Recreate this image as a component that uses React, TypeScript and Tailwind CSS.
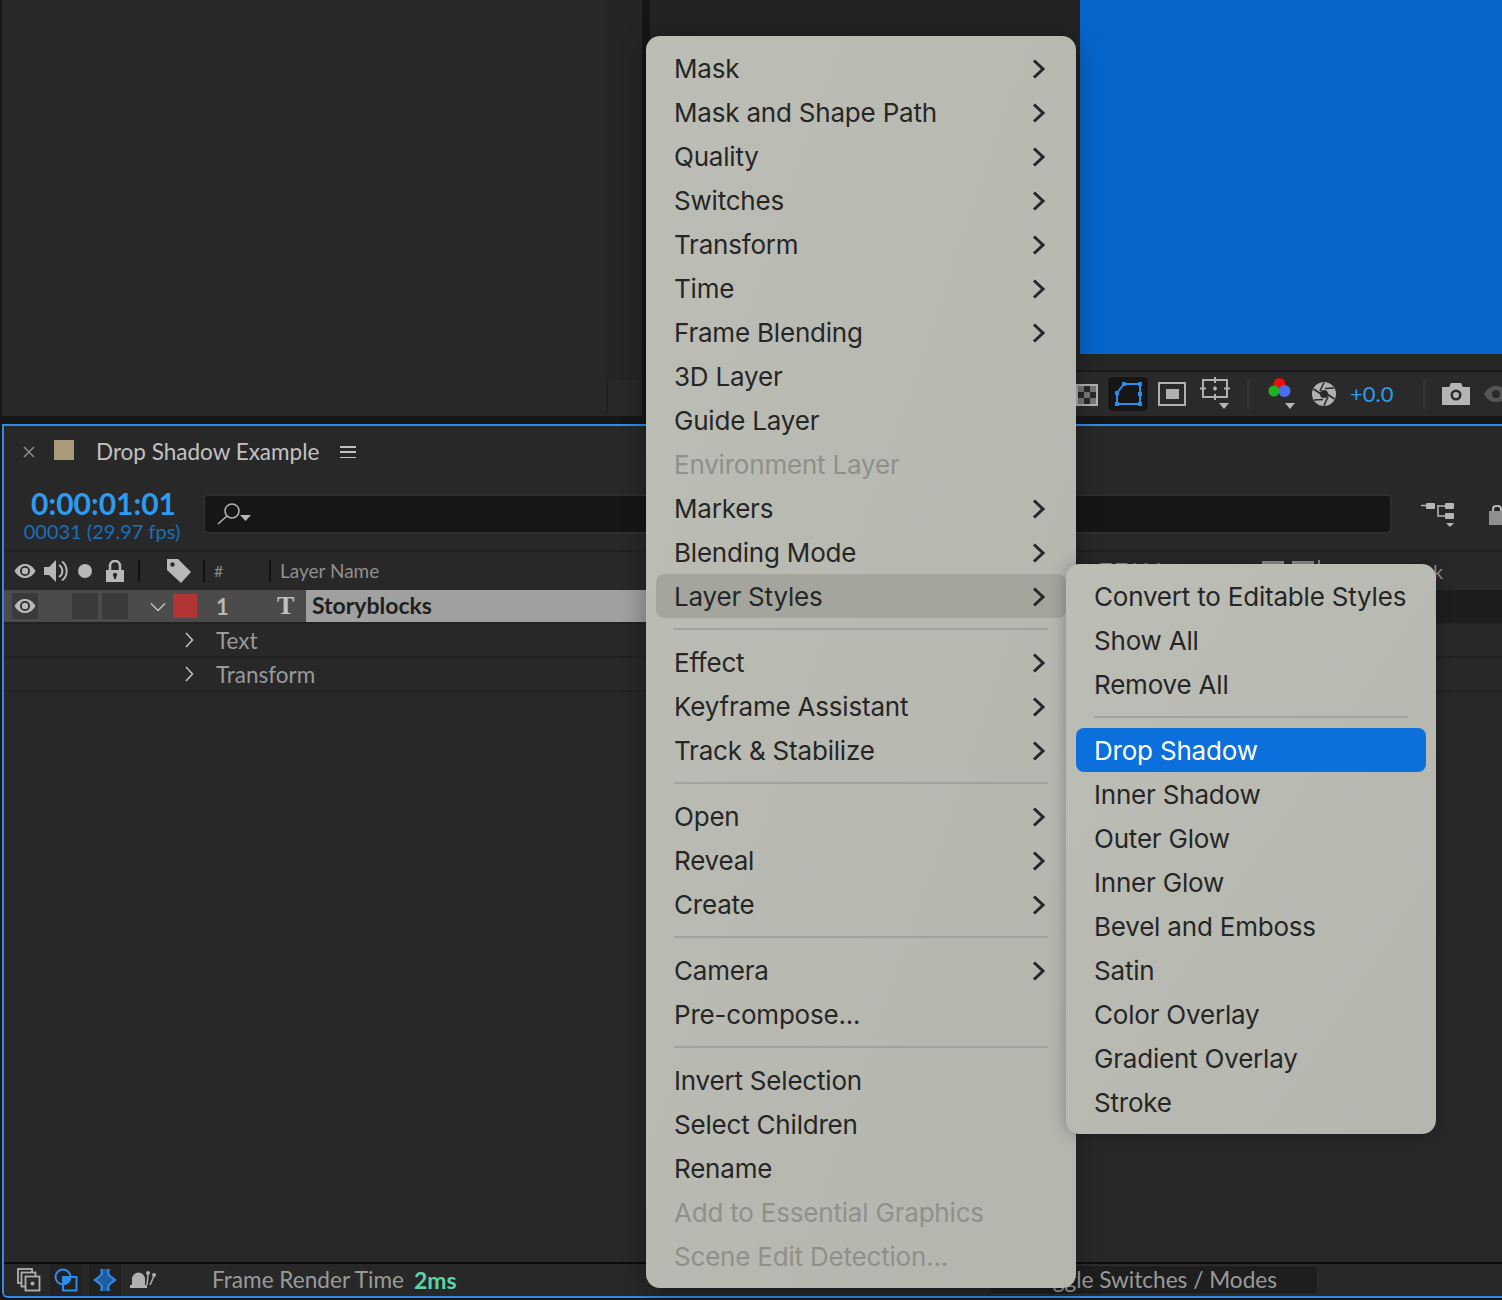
import React from 'react';

const panelFont = { fontFamily: 'Lato, "Noto Sans", sans-serif' };
const menuFont = { fontFamily: 'Inter, "Noto Sans", sans-serif' };

type MenuEntry =
  | { sep: true }
  | { label: string; sub?: boolean; disabled?: boolean; hover?: boolean; active?: boolean };

const mainMenu: MenuEntry[] = [
  { label: 'Mask', sub: true },
  { label: 'Mask and Shape Path', sub: true },
  { label: 'Quality', sub: true },
  { label: 'Switches', sub: true },
  { label: 'Transform', sub: true },
  { label: 'Time', sub: true },
  { label: 'Frame Blending', sub: true },
  { label: '3D Layer' },
  { label: 'Guide Layer' },
  { label: 'Environment Layer', disabled: true },
  { label: 'Markers', sub: true },
  { label: 'Blending Mode', sub: true },
  { label: 'Layer Styles', sub: true, hover: true },
  { sep: true },
  { label: 'Effect', sub: true },
  { label: 'Keyframe Assistant', sub: true },
  { label: 'Track & Stabilize', sub: true },
  { sep: true },
  { label: 'Open', sub: true },
  { label: 'Reveal', sub: true },
  { label: 'Create', sub: true },
  { sep: true },
  { label: 'Camera', sub: true },
  { label: 'Pre-compose...' },
  { sep: true },
  { label: 'Invert Selection' },
  { label: 'Select Children' },
  { label: 'Rename' },
  { label: 'Add to Essential Graphics', disabled: true },
  { label: 'Scene Edit Detection...', disabled: true },
];

const stylesMenu: MenuEntry[] = [
  { label: 'Convert to Editable Styles' },
  { label: 'Show All' },
  { label: 'Remove All' },
  { sep: true },
  { label: 'Drop Shadow', active: true },
  { label: 'Inner Shadow' },
  { label: 'Outer Glow' },
  { label: 'Inner Glow' },
  { label: 'Bevel and Emboss' },
  { label: 'Satin' },
  { label: 'Color Overlay' },
  { label: 'Gradient Overlay' },
  { label: 'Stroke' },
];

function MenuItems({ items }: { items: MenuEntry[] }) {
  return (
    <>
      {items.map((item, i) => {
        if ('sep' in item) {
          return (
            <div key={i} className="h-[22px] flex items-center px-[18px]">
              <div className="h-[2px] w-full bg-[#a1a39c]" />
            </div>
          );
        }
        return (
          <div
            key={i}
            className={`h-[44px] flex items-center justify-between pl-[18px] pr-[20px] rounded-[8px] text-[26px] tracking-[-0.2px] ${
              item.hover ? 'bg-[#a4a69e]' : ''
            } ${item.active ? 'bg-[#0b6fdc] text-white' : item.disabled ? 'text-[#8e9089]' : 'text-[#262626]'}`}
          >
            <span className="whitespace-nowrap">{item.label}</span>
            {item.sub && (
              <svg width="14" height="22" viewBox="0 0 14 22" fill="none" stroke="#26262a" strokeWidth="3" className="mt-[1px]">
                <path d="M2 2.5l9 8.5-9 8.5" />
              </svg>
            )}
          </div>
        );
      })}
    </>
  );
}

function Caret({ className = '' }: { className?: string }) {
  return (
    <svg width="10" height="6" viewBox="0 0 10 6" className={className}>
      <path d="M0 0h10L5 6z" fill="#b5b5b5" />
    </svg>
  );
}

function Eye() {
  return (
    <svg width="22" height="14" viewBox="0 0 22 14">
      <path d="M0.5 7C4 1.5 7.5 0 11 0s7 1.5 10.5 7c-3.5 5.5-7 7-10.5 7S4 12.500.5 7z" fill="#b8b8b8" />
      <circle cx="11" cy="7" r="5" fill="#2a2a2a" />
      <circle cx="11" cy="7" r="3.2" fill="#b8b8b8" />
    </svg>
  );
}

function ViewerToolbar() {
  return (
    <div className="h-[44px] bg-[#2a2a2a] flex items-center overflow-hidden">
      <svg width="22" height="22" viewBox="0 0 22 22" className="ml-[426px] mt-[2px] shrink-0">
        <rect x="1" y="1" width="20" height="20" fill="#2a2a2a" stroke="#b0b0b0" strokeWidth="2" />
        <path d="M2 2h6v6H2zM14 2h6v6h-6zM8 8h6v6H8zM2 14h6v6H2zM14 14h6v6h-6z" fill="#777" />
      </svg>
      <div className="ml-[9px] w-[42px] h-[36px] bg-[#161616] rounded-[5px] border border-[#2f2f2f] flex items-center justify-center shrink-0">
        <svg width="30" height="26" viewBox="0 0 30 26" fill="none" stroke="#2d8ceb" strokeWidth="2">
          <path d="M11 3h16v20H4v-11z" />
          <path d="M9 1h4v4H9zM25 1h4v4h-4zM2 10h4v4H2zM2 21h4v4H2zM25 21h4v4h-4zM25 11h4v4h-4z" fill="#2d8ceb" stroke="none" />
        </svg>
      </div>
      <svg width="28" height="24" viewBox="0 0 28 24" className="ml-[9px] shrink-0">
        <rect x="1" y="1" width="26" height="22" fill="none" stroke="#b0b0b0" strokeWidth="2" />
        <rect x="8" y="7" width="13" height="10" fill="#b0b0b0" />
      </svg>
      <div className="ml-[14px] relative w-[30px] h-[36px] shrink-0">
        <svg width="30" height="24" viewBox="0 0 30 24" fill="none" stroke="#b0b0b0" strokeWidth="2">
          <rect x="3" y="4" width="24" height="17" />
          <path d="M15 1v6M15 18v6M0 12.500h6M24 12.500h6M13 12.500h4M15 10.500v4" />
        </svg>
        <Caret className="absolute right-[1px] bottom-[3px]" />
      </div>
      <div className="ml-[17px] w-[3px] h-[30px] bg-[#333333] shrink-0" />
      <div className="ml-[18px] relative w-[26px] h-[34px] shrink-0">
        <svg width="24" height="22" viewBox="0 0 24 22">
          <circle cx="11.500" cy="7" r="6" fill="#f00a0a" />
          <circle cx="6" cy="14" r="5.500" fill="#1eb41e" />
          <circle cx="16.500" cy="14" r="6" fill="#4a6ef0" />
        </svg>
        <Caret className="absolute right-[-1px] bottom-[2px]" />
      </div>
      <svg width="24" height="24" viewBox="0 0 24 24" className="ml-[18px] shrink-0">
        <circle cx="12" cy="12" r="12" fill="#b0b0b0" />
        <g stroke="#2a2a2a" strokeWidth="1.600" fill="none">
          <path d="M12 0.500L8 9M22 6L13 6.500M22.500 17L15 12M12 23.500l4-9M2 18l9-.5M1.500 7L9 12" />
        </g>
        <circle cx="12" cy="12" r="4" fill="#2a2a2a" />
      </svg>
      <span className="ml-[14px] w-[42px] pb-[2px] text-[22px] text-[#2d9cf0] shrink-0" style={panelFont}>+0.0</span>
      <div className="ml-[31px] w-[3px] h-[30px] bg-[#333333] shrink-0" />
      <svg width="28" height="22" viewBox="0 0 28 22" className="ml-[16px] shrink-0">
        <path d="M0 4h7l2-4h10l2 4h7v18H0z" fill="#b5b5b5" />
        <circle cx="14" cy="12" r="5.500" fill="#2a2a2a" />
        <circle cx="14" cy="12" r="3" fill="#b5b5b5" />
      </svg>
      <svg width="24" height="22" viewBox="0 0 24 22" className="ml-[14px] shrink-0" fill="#555">
        <path d="M0 11C4 4 8 3 12 3s8 1 12 8c-4 7-8 8-12 8S4 18 0 11z" />
        <circle cx="12" cy="11" r="4" fill="#2a2a2a" />
      </svg>
    </div>
  );
}

function TimelineHeader() {
  return (
    <div className="h-[52px] flex items-center shrink-0">
      <svg width="12" height="12" viewBox="0 0 12 12" stroke="#8c8c8c" strokeWidth="1.500" className="ml-[19px]">
        <path d="M1 1l10 10M11 1L1 11" />
      </svg>
      <div className="ml-[19px] mb-[4px] w-[20px] h-[20px] bg-[#a99a7b]" />
      <span className="ml-[22px] w-[223px] text-[22.5px] text-[#c2c2c2] whitespace-nowrap" style={panelFont}>Drop Shadow Example</span>
      <div className="ml-[21px] w-[16px] h-[12px] flex flex-col justify-between">
        <div className="h-[1.5px] bg-[#c2c2c2]" />
        <div className="h-[1.5px] bg-[#c2c2c2]" />
        <div className="h-[1.5px] bg-[#c2c2c2]" />
      </div>
    </div>
  );
}

function TimeRow() {
  return (
    <div className="h-[74px] flex items-start shrink-0 border-b-2 border-[#212121]" style={panelFont}>
      <div className="w-[199px] pt-[9px] flex flex-col items-center shrink-0">
        <span className="text-[30px] leading-[32px] font-bold text-[#2d9cf0] whitespace-nowrap">0:00:01:01</span>
        <span className="text-[20px] leading-[25px] text-[#1a6fb8] whitespace-nowrap pr-[3px]">00031 (29.97 fps)</span>
      </div>
      <div className="mt-[16px] w-[1189px] h-[40px] bg-[#161616] border-2 border-[#2e2e2e] rounded-[5px] flex items-center pl-[12px] shrink-0">
        <svg width="36" height="24" viewBox="0 0 36 24" fill="none" stroke="#b5b5b5" strokeWidth="1.500">
          <circle cx="15" cy="9" r="7" />
          <path d="M10 14L1 22" />
          <path d="M23 13h11l-5.500 6z" fill="#b5b5b5" stroke="none" />
        </svg>
      </div>
      <svg width="36" height="28" viewBox="0 0 36 28" className="ml-[29px] mt-[25px] shrink-0">
        <path d="M0 2.500h6M16 3h10M17 3v10h10" fill="none" stroke="#b5b5b5" strokeWidth="1.500" />
        <rect x="5" y="0" width="9" height="6" rx="1" fill="#b5b5b5" />
        <rect x="24" y="0" width="9" height="6" rx="1" fill="#b5b5b5" />
        <rect x="24" y="10" width="9" height="6" rx="1" fill="#b5b5b5" />
        <path d="M25 20h8l-4 4z" fill="#b5b5b5" />
      </svg>
      <div className="ml-[32px] mt-[27px] w-[14px] shrink-0 flex flex-col">
        <div className="ml-[3px] w-[10px] h-[6px] border-2 border-b-0 border-[#b5b5b5] rounded-t-[4px]" />
        <div className="w-[14px] h-[14px] bg-[#8f8f8f]" />
      </div>
    </div>
  );
}

function ColumnHeader() {
  return (
    <div className="h-[38px] flex items-center shrink-0 text-[#8f8f8f] text-[19px] relative" style={panelFont}>
      <div className="ml-[10px]"><Eye /></div>
      <svg width="26" height="24" viewBox="0 0 26 24" className="ml-[8px]">
        <path d="M0 8h5l7-7v22l-7-7H0z" fill="#b8b8b8" />
        <path d="M15 6a7 7 0 010 12M18 2.500a12 12 0 010 19" fill="none" stroke="#b8b8b8" strokeWidth="2" />
      </svg>
      <div className="ml-[8px] w-[14px] h-[14px] rounded-full bg-[#b8b8b8]" />
      <svg width="20" height="22" viewBox="0 0 20 22" className="ml-[13px]">
        <path d="M5 10V6a5 5 0 0110 0v4" fill="none" stroke="#b8b8b8" strokeWidth="2.500" />
        <rect x="1" y="10" width="18" height="12" fill="#b8b8b8" />
        <circle cx="10" cy="15" r="2.200" fill="#2a2a2a" />
        <path d="M9 15h2v4H9z" fill="#2a2a2a" />
      </svg>
      <div className="ml-[13px] w-[2px] h-[22px] bg-[#111111]" />
      <svg width="26" height="24" viewBox="0 0 26 24" className="ml-[26px]">
        <path d="M1 0h11l13 13-10 11L1 11z" fill="#b8b8b8" />
        <circle cx="6.500" cy="5.500" r="2.200" fill="#2a2a2a" />
      </svg>
      <div className="ml-[11px] w-[2px] h-[22px] bg-[#111111]" />
      <span className="ml-[9px] w-[10px] text-[16px]">#</span>
      <div className="ml-[45px] w-[2px] h-[22px] bg-[#111111]" />
      <span className="ml-[9px] w-[98px] whitespace-nowrap">Layer Name</span>
      <span className="ml-[722px] w-[162px] pb-[4px] text-[20px] whitespace-nowrap">T  TrkMat</span>
      <div className="w-[22px] h-[20px] bg-[#8f8f8f]" />
      <div className="ml-[8px] w-[22px] h-[20px] bg-[#8f8f8f]" />
      <div className="ml-[4px] w-[2px] h-[22px] bg-[#8f8f8f]" />
      <span className="ml-[5px] pb-[1px] text-[20px] whitespace-nowrap">Parent &amp; Link</span>
    </div>
  );
}

function LayerRow() {
  return (
    <div className="h-[32px] flex shrink-0 bg-[#1d1d1d]" style={panelFont}>
      <div className="w-[302px] bg-[#4b4b4b] flex items-center shrink-0">
        <div className="ml-[8px] w-[26px] h-[26px] bg-[#3a3a3a] flex items-center justify-center"><Eye /></div>
        <div className="ml-[34px] w-[26px] h-[26px] bg-[#3a3a3a]" />
        <div className="ml-[4px] w-[26px] h-[26px] bg-[#3a3a3a]" />
        <svg width="16" height="10" viewBox="0 0 16 10" fill="none" stroke="#c2c2c2" strokeWidth="1.500" className="ml-[22px] mt-[2px]">
          <path d="M1 1.500l7 7 7-7" />
        </svg>
        <div className="ml-[7px] w-[24px] h-[24px] bg-[#b23535]" />
        <span className="ml-[19px] w-[12px] text-[22px] font-bold text-[#b8b8b8]">1</span>
        <span className="ml-[49px] text-[26px] leading-none font-bold text-[#c2c2c2]" style={{ fontFamily: '"Liberation Serif", serif' }}>T</span>
      </div>
      <div className="w-[760px] bg-[#a0a0a0] pl-[6px] pb-[2px] flex items-center text-[23px] font-bold text-[#1f1f1f] shrink-0">Storyblocks</div>
    </div>
  );
}

function SubRow({ label }: { label: string }) {
  return (
    <div className="h-[34px] flex items-center shrink-0 border-t-2 border-[#212121] text-[22.500px] text-[#9a9a9a]" style={panelFont}>
      <svg width="9" height="16" viewBox="0 0 9 16" fill="none" stroke="#c2c2c2" strokeWidth="1.500" className="ml-[181px]">
        <path d="M1 1l6.500 7L1 15" />
      </svg>
      <span className="ml-[22px] pt-[2px]">{label}</span>
    </div>
  );
}

function TimelineFooter() {
  return (
    <div className="h-[34px] border-t-2 border-[#0c0c0c] flex items-center shrink-0 bg-[#282828]" style={panelFont}>
      <svg width="24" height="24" viewBox="0 0 24 24" fill="none" stroke="#b0b0b0" strokeWidth="1.800" className="ml-[13px]">
        <rect x="1" y="1" width="14" height="14" />
        <rect x="4.500" y="4.500" width="14" height="14" fill="#282828" />
        <rect x="8.500" y="8.500" width="14" height="14" fill="#282828" />
        <circle cx="15.500" cy="15.500" r="2" fill="#b0b0b0" stroke="none" />
      </svg>
      <div className="ml-[9px] w-[32px] h-[32px] bg-[#222222] flex items-center justify-center">
        <svg width="24" height="24" viewBox="0 0 24 24" fill="none" stroke="#2d8ceb" strokeWidth="2">
          <circle cx="9" cy="9" r="7.500" />
          <rect x="9" y="9" width="13.500" height="13.500" />
          <path d="M9 9h7.500a7.500 7.500 0 01-7.500 7.500z" fill="#2d8ceb" stroke="none" />
        </svg>
      </div>
      <div className="ml-[7px] w-[32px] h-[32px] bg-[#222222] flex items-center justify-center">
        <svg width="24" height="24" viewBox="0 0 24 24">
          <path d="M7 1h10c-2 3-2 5 0 7l5 4-5 4c-2 2-2 4 0 7H7c2-3 2-5 0-7l-5-4 5-4c2-2 2-4 0-7z" fill="#1e5e9e" />
          <path d="M8 1c1.500 3 1.500 5-1 7l-5 4 5 4c2.500 2 2.500 4 1 7M16 1c-1.500 3-1.500 5 1 7l5 4-5 4c-2.500 2-2.500 4-1 7" fill="none" stroke="#2d8ceb" strokeWidth="2.200" />
        </svg>
      </div>
      <svg width="26" height="20" viewBox="0 0 26 20" className="ml-[9px]">
        <path d="M2 15V9a6.500 6.500 0 0113 0v6h2v3H0v-3z" fill="#b0b0b0" />
        <path d="M17 15l1-10M20 15l4-9" stroke="#b0b0b0" strokeWidth="1.500" />
        <circle cx="18" cy="3" r="2" fill="#b0b0b0" />
        <circle cx="24" cy="5" r="2" fill="#b0b0b0" />
      </svg>
      <span className="ml-[56px] w-[192px] text-[22.600px] text-[#9a9a9a] whitespace-nowrap">Frame Render Time</span>
      <span className="ml-[10px] w-[43px] text-[23px] font-bold text-[#5fd3a8]">2ms</span>
      <div className="ml-[533px] w-[328px] h-[30px] bg-[#1e1e1e] border border-[#2e2e2e] rounded-[3px] flex items-center justify-end pr-[40px] text-[22.600px] text-[#9a9a9a] whitespace-nowrap shrink-0">
        Toggle Switches / Modes
      </div>
    </div>
  );
}

export default function App() {
  return (
    <div className="relative w-[1502px] h-[1300px] bg-[#161616] overflow-hidden flex flex-col">
      <div className="h-[416px] flex shrink-0">
        {/* project panel */}
        <div className="ml-[2px] w-[640px] bg-[#282828] flex justify-end shrink-0">
          <div className="w-[36px] flex flex-col">
            <div className="h-[380px] bg-[#252525]" />
            <div className="h-[34px] border-l-2 border-[#1f1f1f]" />
          </div>
        </div>
        {/* viewer panel */}
        <div className="ml-[8px] flex-1 min-w-0 flex flex-col">
          <div className="h-[354px] bg-[#232323] flex justify-end">
            <div className="w-[422px] bg-[#0665c9]" />
          </div>
          <div className="h-[16px] bg-[#262626]" />
          <div className="h-[2px] bg-[#1a1a1a]" />
          <ViewerToolbar />
        </div>
      </div>

      {/* timeline panel */}
      <div className="mt-[8px] ml-[2px] h-[874px] border-2 border-r-0 border-[#2d8ceb] rounded-bl-[6px] bg-[#282828] flex flex-col overflow-hidden">
        <TimelineHeader />
        <TimeRow />
        <ColumnHeader />
        <LayerRow />
        <SubRow label="Text" />
        <SubRow label="Transform" />
        <div className="flex-1 border-t-2 border-[#212121]" />
        <TimelineFooter />
      </div>

      {/* context menu */}
      <div
        className="absolute left-[646px] top-[36px] w-[430px] h-[1252px] rounded-[14px] bg-linear-to-br from-[#bcbeb6] to-[#b4b6ae] px-[10px] pt-[10px] pb-[10px] shadow-[0_4px_24px_rgba(0,0,0,0.35)]"
        style={menuFont}
      >
        <MenuItems items={mainMenu} />
      </div>
      <div
        className="absolute left-[1066px] top-[564px] w-[370px] h-[570px] rounded-[14px] bg-linear-to-br from-[#bcbeb6] to-[#b5b7af] px-[10px] pt-[10px] pb-[10px] shadow-[0_0_16px_rgba(0,0,0,0.3)]"
        style={menuFont}
      >
        <MenuItems items={stylesMenu} />
      </div>
    </div>
  );
}
